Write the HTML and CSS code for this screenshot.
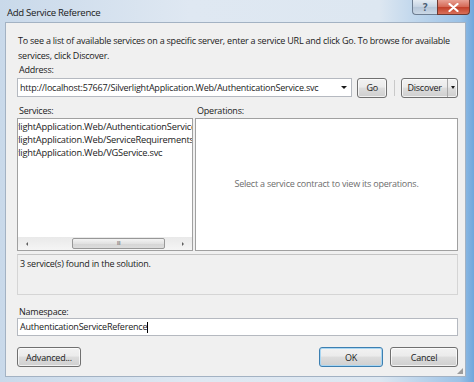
FILE: index.html
```html
<!DOCTYPE html>
<html lang="en">
<head>
    <meta charset="UTF-8">
    <title>Add Service Reference</title>
    <link rel="stylesheet" href="styles.css">
</head>
<body>
    <div class="window">
        <div class="titlebar">
            <span class="title">Add Service Reference</span>
            <div class="caption-buttons">
                <div class="cap-btn help">?</div>
                <div class="cap-btn close">
                    <svg width="11" height="9" viewBox="0 0 11 9">
                        <path d="M1.5 1 L9.5 8 M9.5 1 L1.5 8" stroke="#fff" stroke-width="2.2" stroke-linecap="round"/>
                    </svg>
                </div>
            </div>
        </div>

        <div class="client">
            <p class="intro">To see a list of available services on a specific server, enter a service URL and click Go. To browse for available services, click Discover.</p>

            <div class="label">Address:</div>
            <div class="address-row">
                <div class="combo">
                    <span class="combo-text">http://localhost:57667/SilverlightApplication.Web/AuthenticationService.svc</span>
                    <span class="arrow-down"></span>
                </div>
                <button class="btn go">Go</button>
                <div class="sep"></div>
                <div class="btn split">
                    <span class="split-main">Discover</span>
                    <span class="split-drop"><span class="arrow-down small"></span></span>
                </div>
            </div>

            <div class="panes">
                <div class="pane services-pane">
                    <div class="label">Services:</div>
                    <div class="listbox">
                        <div class="list-items">
                            <div class="list-item">SilverlightApplication.Web/AuthenticationService.svc</div>
                            <div class="list-item">SilverlightApplication.Web/ServiceRequirements.svc</div>
                            <div class="list-item">SilverlightApplication.Web/VGService.svc</div>
                        </div>
                        <div class="hscroll">
                            <span class="sb-arrow left"></span>
                            <div class="sb-track">
                                <div class="sb-thumb">III</div>
                            </div>
                            <span class="sb-arrow right"></span>
                        </div>
                    </div>
                </div>
                <div class="pane operations-pane">
                    <div class="label">Operations:</div>
                    <div class="opsbox">
                        <span class="placeholder">Select a service contract to view its operations.</span>
                    </div>
                </div>
            </div>

            <div class="status">3 service(s) found in the solution.</div>

            <div class="label ns-label">Namespace:</div>
            <div class="textbox">AuthenticationServiceReference<span class="caret"></span></div>

            <div class="footer">
                <button class="btn advanced">Advanced...</button>
                <div class="footer-right">
                    <button class="btn ok">OK</button>
                    <button class="btn cancel">Cancel</button>
                </div>
            </div>
            <div class="grip"></div>
        </div>
    </div>
</body>
</html>
```

FILE: styles.css
```css
body {
    margin: 0;
    padding: 0;
    font-family: "Open Sans", "Noto Sans", sans-serif;
    font-size: 9px;
    letter-spacing: -0.22px;
    color: #1b1b1b;
}
.window {
    width: 474px;
    height: 382px;
    background: linear-gradient(to right, #c9d9ea 0%, #dfe8f2 40%, #dde7f1 80%, #9cc2e6 97%, #6fa7dc 100%);
    display: flex;
    flex-direction: column;
    overflow: hidden;
}
.titlebar {
    height: 22px;
    display: flex;
    justify-content: space-between;
    align-items: flex-start;
    flex-shrink: 0;
}
.title {
    font-size: 9.6px;
    letter-spacing: -0.3px;
    color: #1a1a1a;
    margin: 6px 0 0 7px;
}
.caption-buttons {
    display: flex;
    margin-right: 4px;
}
.cap-btn {
    height: 15px;
    display: flex;
    align-items: center;
    justify-content: center;
    border: 1px solid #6d7d91;
    border-top: none;
    box-sizing: border-box;
}
.help {
    width: 25px;
    border-radius: 0 0 0 4px;
    background: linear-gradient(#e4ebf3, #c5d3e2 50%, #b6c6d8 51%, #cbd8e6);
    color: #4b5d73;
    font-size: 10px;
    font-weight: bold;
    border-right: none;
}
.close {
    width: 33px;
    border-radius: 0 0 4px 0;
    border-color: #6f3a32;
    background: linear-gradient(#e8a194, #d56a57 48%, #c2402a 52%, #d8705a);
}
.client {
    flex: 1;
    margin: 0 8px 5px 5px;
    background: #f0f0f0;
    border: 1px solid #a3b2c3;
    padding: 10px 7px 0 11px;
    position: relative;
}
.intro {
    margin: 0;
    line-height: 15px;
    padding-left: 1px;
}
.label {
    line-height: 14px;
    padding-left: 2px;
}
.address-row {
    display: flex;
    align-items: center;
    height: 19px;
    margin-top: 1px;
}
.combo {
    width: 336px;
    height: 19px;
    box-sizing: border-box;
    background: #fff;
    border: 1px solid #b5b9c0;
    display: flex;
    align-items: center;
    padding: 0 4px 0 2px;
    white-space: nowrap;
}
.combo-text {
    flex: 1;
    overflow: hidden;
}
.arrow-down {
    width: 0;
    height: 0;
    border-left: 3px solid transparent;
    border-right: 3px solid transparent;
    border-top: 3px solid #1a1a1a;
    flex-shrink: 0;
}
.btn {
    font-family: inherit;
    font-size: inherit;
    letter-spacing: inherit;
    color: #1b1b1b;
    height: 20px;
    box-sizing: border-box;
    border: 1px solid #707070;
    border-radius: 3px;
    background: linear-gradient(#f2f2f2 0%, #ebebeb 45%, #dddddd 50%, #cfcfcf 100%);
    box-shadow: inset 0 0 0 1px rgba(255, 255, 255, 0.7);
    padding: 0;
}
.go {
    width: 30px;
    margin-left: 5px;
}
.sep {
    width: 1px;
    height: 16px;
    background: #c9c9c9;
    margin: 0 6px 0 7px;
}
.split {
    width: 57px;
    display: flex;
    align-items: stretch;
}
.split-main {
    flex: 1;
    display: flex;
    align-items: center;
    justify-content: center;
    border-right: 1px solid #a8a8a8;
}
.split-drop {
    width: 9px;
    display: flex;
    align-items: center;
    justify-content: center;
}
.arrow-down.small {
    border-left-width: 2px;
    border-right-width: 2px;
    border-top-width: 3px;
}
.panes {
    display: flex;
    gap: 2px;
    margin-top: 7px;
}
.services-pane {
    width: 176px;
}
.operations-pane {
    flex: 1;
}
.listbox,
.opsbox {
    height: 133px;
    box-sizing: border-box;
    border: 1px solid #a0a0a0;
    background: #fff;
    overflow: hidden;
}
.listbox {
    display: flex;
    flex-direction: column;
}
.list-items {
    flex: 1;
    overflow: hidden;
    white-space: nowrap;
    padding-top: 1px;
}
.list-item {
    font-size: 9.3px;
    line-height: 13px;
    margin-left: -22px;
}
.hscroll {
    height: 13px;
    display: flex;
    align-items: center;
    background: linear-gradient(#e9e9e9, #f5f5f5);
    padding: 0 2px;
}
.sb-arrow {
    width: 0;
    height: 0;
    border-top: 2px solid transparent;
    border-bottom: 2px solid transparent;
    margin: 0 6px;
}
.sb-arrow.left {
    border-right: 2px solid #606060;
}
.sb-arrow.right {
    border-left: 2px solid #606060;
}
.sb-track {
    flex: 1;
    padding-left: 38px;
    padding-right: 11px;
}
.sb-thumb {
    height: 11px;
    box-sizing: border-box;
    border: 1px solid #989898;
    border-radius: 2px;
    background: linear-gradient(#f3f3f3, #e2e2e2 50%, #d5d5d5 51%, #dcdcdc);
    font-size: 6px;
    line-height: 9px;
    text-align: center;
    color: #5f5f5f;
    letter-spacing: -0.5px;
}
.opsbox {
    display: flex;
    align-items: center;
    justify-content: center;
    padding-bottom: 2px;
}
.placeholder {
    color: #6d6d6d;
}
.status {
    margin-top: 3px;
    height: 41px;
    box-sizing: border-box;
    border: 1px solid #d5d5d5;
    border-top-color: #c4c4c4;
    padding: 2px 2px;
    line-height: 13px;
}
.ns-label {
    margin-top: 10px;
    line-height: 13px;
}
.textbox {
    height: 18px;
    box-sizing: border-box;
    border: 1px solid #b5b9c0;
    background: #fff;
    padding: 0 2px;
    line-height: 16px;
    display: flex;
    align-items: center;
}
.caret {
    width: 1px;
    height: 11px;
    background: #000;
}
.footer {
    display: flex;
    justify-content: space-between;
    margin-top: 11px;
}
.footer-right {
    display: flex;
    gap: 7px;
}
.advanced {
    width: 64px;
}
.ok {
    width: 64px;
    border-color: #3c7fb1;
    box-shadow: inset 0 0 0 1px #a9d6f2;
}
.cancel {
    width: 68px;
}
.grip {
    position: absolute;
    right: 2px;
    bottom: 2px;
    width: 6px;
    height: 6px;
    background: radial-gradient(circle, #9a9a9a 0.7px, transparent 1px) 0 0 / 2px 2px;
    clip-path: polygon(100% 0, 100% 100%, 0 100%);
}
```
